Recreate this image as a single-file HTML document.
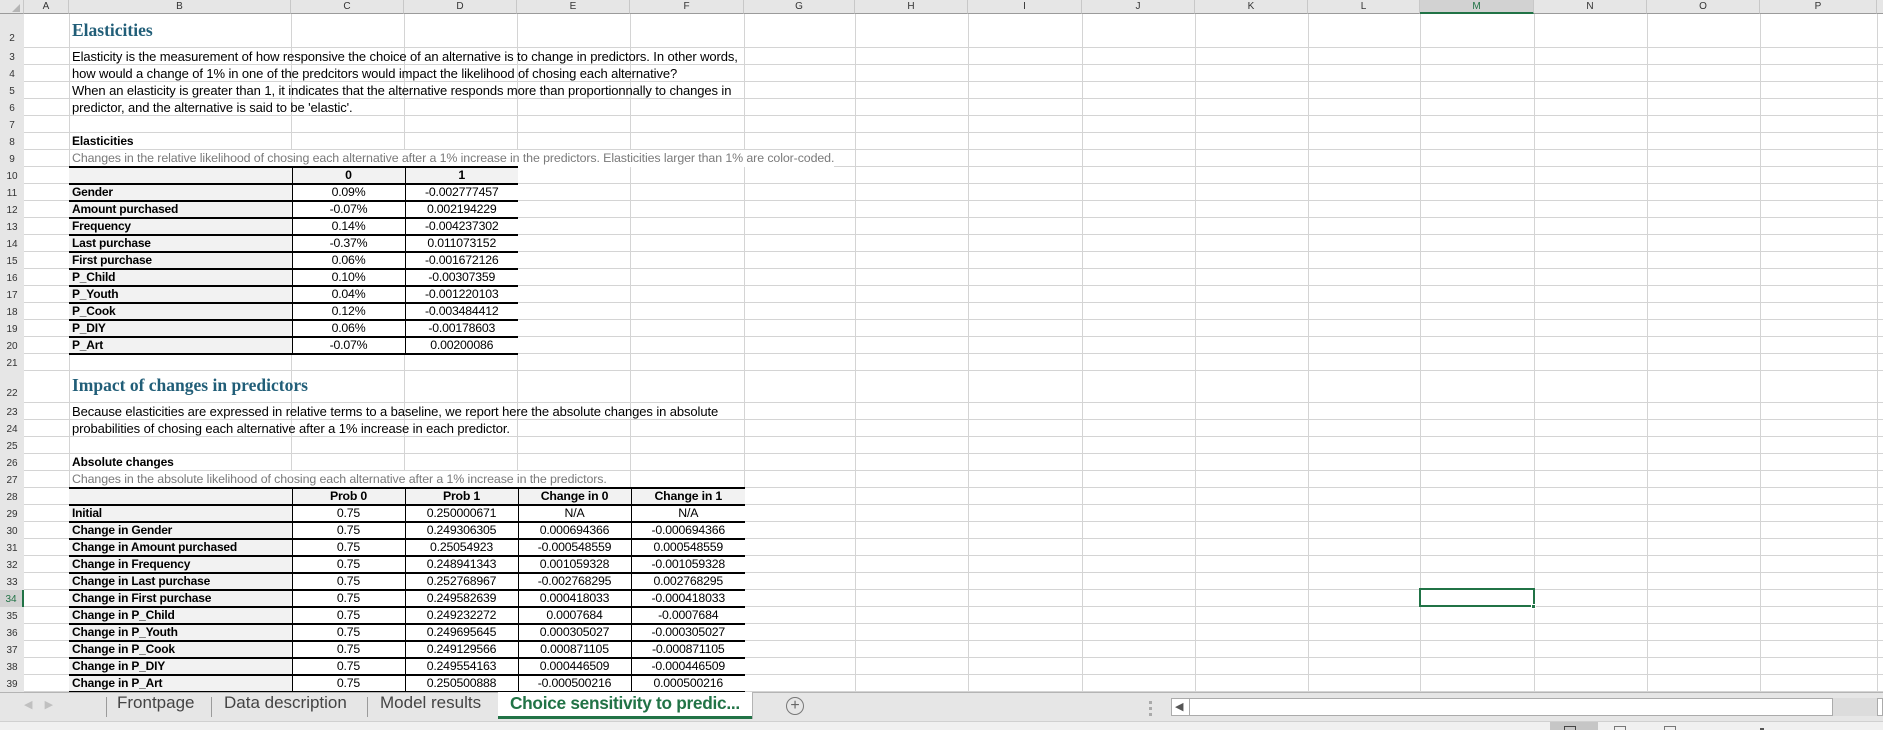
<!DOCTYPE html>
<html><head><meta charset="utf-8">
<style>
*{margin:0;padding:0;box-sizing:border-box}
body{width:1883px;height:730px;overflow:hidden;background:#fff;position:relative;font-family:"Liberation Sans",sans-serif;font-size:11px;color:#000}
.a{position:absolute;white-space:nowrap}
.vl{position:absolute;top:0;width:1px;height:692px;background:#d4d4d4}
.hdr{position:absolute;top:0;height:14px;background:#e6e6e6;border-bottom:1px solid #9b9b9b;text-align:center;font-size:10px;line-height:14px;color:#333;border-right:1px solid #c8c8c8}
.rn{position:absolute;left:0;width:24px;height:17px;font-size:10px;color:#333;text-align:center;line-height:19px;background:#e6e6e6}
.t{position:absolute;left:72px;font-size:13px;line-height:17px;letter-spacing:-0.1px;color:#000}
.g{color:#7a7a7a;font-size:12.4px}
.title{position:absolute;left:72px;font-family:"Liberation Serif",serif;font-weight:bold;color:#215e78;font-size:17.5px}
table{position:absolute;border-collapse:collapse;font-size:12.3px;letter-spacing:-0.2px;table-layout:fixed}
td{height:17px;border-bottom:2px solid #000;padding:0 3px;text-align:center;line-height:15px;background:#fff;border-left:1px solid #000;overflow:hidden;white-space:nowrap}
td.l{text-align:left;font-weight:bold;background:#f2f2f2;border-left:none;font-size:12px}
tr.h td{background:#f2f2f2;font-weight:bold}
</style></head><body>
<div class="a" style="left:0;top:0;width:1883px;height:692px;background:
repeating-linear-gradient(to bottom,transparent 0,transparent 16px,#d4d4d4 16px,#d4d4d4 17px) 0 48px/1883px 323px no-repeat,
repeating-linear-gradient(to bottom,transparent 0,transparent 16px,#d4d4d4 16px,#d4d4d4 17px) 0 403px/1883px 289px no-repeat;"></div>
<div class="a" style="left:0;top:47px;width:1883px;height:1px;background:#d4d4d4"></div>
<div class="a" style="left:0;top:402px;width:1883px;height:1px;background:#d4d4d4"></div>
<div class="vl" style="left:69px"></div><div class="vl" style="left:291px"></div><div class="vl" style="left:404px"></div><div class="vl" style="left:517px"></div><div class="vl" style="left:630px"></div><div class="vl" style="left:744px"></div><div class="vl" style="left:855px"></div><div class="vl" style="left:968px"></div><div class="vl" style="left:1082px"></div><div class="vl" style="left:1195px"></div><div class="vl" style="left:1308px"></div><div class="vl" style="left:1420px"></div><div class="vl" style="left:1534px"></div><div class="vl" style="left:1647px"></div><div class="vl" style="left:1760px"></div><div class="vl" style="left:1877px"></div>
<div class="hdr" style="left:0;width:24px"><span style="position:absolute;right:3px;bottom:1px;width:0;height:0;border-left:8px solid transparent;border-bottom:8px solid #b5b5b5"></span></div>
<div class="hdr" style="left:24px;width:45px">A</div>
<div class="hdr" style="left:69px;width:222px">B</div>
<div class="hdr" style="left:291px;width:113px">C</div>
<div class="hdr" style="left:404px;width:113px">D</div>
<div class="hdr" style="left:517px;width:113px">E</div>
<div class="hdr" style="left:630px;width:114px">F</div>
<div class="hdr" style="left:744px;width:111px">G</div>
<div class="hdr" style="left:855px;width:113px">H</div>
<div class="hdr" style="left:968px;width:114px">I</div>
<div class="hdr" style="left:1082px;width:113px">J</div>
<div class="hdr" style="left:1195px;width:113px">K</div>
<div class="hdr" style="left:1308px;width:112px">L</div>
<div class="hdr" style="left:1420px;width:114px;background:#d2d2d2;border-bottom:2px solid #217346;color:#217346">M</div>
<div class="hdr" style="left:1534px;width:113px">N</div>
<div class="hdr" style="left:1647px;width:113px">O</div>
<div class="hdr" style="left:1760px;width:117px">P</div>
<div class="hdr" style="left:1877px;width:6px;border-right:none"></div>
<div class="a" style="left:0;top:14px;width:24px;height:678px;background:#e6e6e6;border-right:1px solid #9b9b9b"></div>
<div class="rn" style="top:14px;height:34px;line-height:50px">2</div>
<div class="rn" style="top:48px">3</div><div class="rn" style="top:65px">4</div><div class="rn" style="top:82px">5</div><div class="rn" style="top:99px">6</div><div class="rn" style="top:116px">7</div><div class="rn" style="top:133px">8</div><div class="rn" style="top:150px">9</div><div class="rn" style="top:167px">10</div><div class="rn" style="top:184px">11</div><div class="rn" style="top:201px">12</div><div class="rn" style="top:218px">13</div><div class="rn" style="top:235px">14</div><div class="rn" style="top:252px">15</div><div class="rn" style="top:269px">16</div><div class="rn" style="top:286px">17</div><div class="rn" style="top:303px">18</div><div class="rn" style="top:320px">19</div><div class="rn" style="top:337px">20</div><div class="rn" style="top:354px">21</div>
<div class="rn" style="top:371px;height:32px;line-height:46px">22</div>
<div class="rn" style="top:403px">23</div><div class="rn" style="top:420px">24</div><div class="rn" style="top:437px">25</div><div class="rn" style="top:454px">26</div><div class="rn" style="top:471px">27</div><div class="rn" style="top:488px">28</div><div class="rn" style="top:505px">29</div><div class="rn" style="top:522px">30</div><div class="rn" style="top:539px">31</div><div class="rn" style="top:556px">32</div><div class="rn" style="top:573px">33</div>
<div class="rn" style="top:590px;background:#d2d2d2;color:#217346;border-right:2px solid #217346">34</div>
<div class="rn" style="top:607px">35</div><div class="rn" style="top:624px">36</div><div class="rn" style="top:641px">37</div><div class="rn" style="top:658px">38</div><div class="rn" style="top:675px">39</div>
<div class="title" style="top:20px">Elasticities</div>
<div class="t" style="top:48px">Elasticity is the measurement of how responsive the choice of an alternative is to change in predictors. In other words,</div>
<div class="t" style="top:65px">how would a change of 1% in one of the predcitors would impact the likelihood of chosing each alternative?</div>
<div class="t" style="top:82px">When an elasticity is greater than 1, it indicates that the alternative responds more than proportionnally to changes in</div>
<div class="t" style="top:99px">predictor, and the alternative is said to be 'elastic'.</div>
<div class="t" style="top:133px;font-weight:bold;font-size:12px">Elasticities</div>
<div class="t g" style="top:150px;background:#fff">Changes in the relative likelihood of chosing each alternative after a 1% increase in the predictors. Elasticities larger than 1% are color-coded.</div>
<div class="title" style="top:375px">Impact of changes in predictors</div>
<div class="t" style="top:403px">Because elasticities are expressed in relative terms to a baseline, we report here the absolute changes in absolute</div>
<div class="t" style="top:420px">probabilities of chosing each alternative after a 1% increase in each predictor.</div>
<div class="t" style="top:454px;font-weight:bold;font-size:12px">Absolute changes</div>
<div class="t g" style="top:471px;background:#fff;padding-right:4px">Changes in the absolute likelihood of chosing each alternative after a 1% increase in the predictors.</div>
<table style="left:69px;top:166px;width:449px;border-top:2px solid #000">
<colgroup><col style="width:223px"><col style="width:113px"><col style="width:113px"></colgroup>
<tr class="h"><td class="l"></td><td>0</td><td>1</td></tr>
<tr><td class="l">Gender</td><td>0.09%</td><td>-0.002777457</td></tr>
<tr><td class="l">Amount purchased</td><td>-0.07%</td><td>0.002194229</td></tr>
<tr><td class="l">Frequency</td><td>0.14%</td><td>-0.004237302</td></tr>
<tr><td class="l">Last purchase</td><td>-0.37%</td><td>0.011073152</td></tr>
<tr><td class="l">First purchase</td><td>0.06%</td><td>-0.001672126</td></tr>
<tr><td class="l">P_Child</td><td>0.10%</td><td>-0.00307359</td></tr>
<tr><td class="l">P_Youth</td><td>0.04%</td><td>-0.001220103</td></tr>
<tr><td class="l">P_Cook</td><td>0.12%</td><td>-0.003484412</td></tr>
<tr><td class="l">P_DIY</td><td>0.06%</td><td>-0.00178603</td></tr>
<tr><td class="l">P_Art</td><td>-0.07%</td><td>0.00200086</td></tr>
</table>
<table style="left:69px;top:487px;width:676px;border-top:2px solid #000">
<colgroup><col style="width:223px"><col style="width:113px"><col style="width:113px"><col style="width:113px"><col style="width:114px"></colgroup>
<tr class="h"><td class="l"></td><td>Prob 0</td><td>Prob 1</td><td>Change in 0</td><td>Change in 1</td></tr>
<tr><td class="l">Initial</td><td>0.75</td><td>0.250000671</td><td>N/A</td><td>N/A</td></tr>
<tr><td class="l">Change in Gender</td><td>0.75</td><td>0.249306305</td><td>0.000694366</td><td>-0.000694366</td></tr>
<tr><td class="l">Change in Amount purchased</td><td>0.75</td><td>0.25054923</td><td>-0.000548559</td><td>0.000548559</td></tr>
<tr><td class="l">Change in Frequency</td><td>0.75</td><td>0.248941343</td><td>0.001059328</td><td>-0.001059328</td></tr>
<tr><td class="l">Change in Last purchase</td><td>0.75</td><td>0.252768967</td><td>-0.002768295</td><td>0.002768295</td></tr>
<tr><td class="l">Change in First purchase</td><td>0.75</td><td>0.249582639</td><td>0.000418033</td><td>-0.000418033</td></tr>
<tr><td class="l">Change in P_Child</td><td>0.75</td><td>0.249232272</td><td>0.0007684</td><td>-0.0007684</td></tr>
<tr><td class="l">Change in P_Youth</td><td>0.75</td><td>0.249695645</td><td>0.000305027</td><td>-0.000305027</td></tr>
<tr><td class="l">Change in P_Cook</td><td>0.75</td><td>0.249129566</td><td>0.000871105</td><td>-0.000871105</td></tr>
<tr><td class="l">Change in P_DIY</td><td>0.75</td><td>0.249554163</td><td>0.000446509</td><td>-0.000446509</td></tr>
<tr><td class="l">Change in P_Art</td><td>0.75</td><td>0.250500888</td><td>-0.000500216</td><td>0.000500216</td></tr>
</table>
<div class="a" style="left:1419px;top:588px;width:116px;height:19px;border:2px solid #217346"></div>
<div class="a" style="left:1531px;top:604px;width:5px;height:5px;background:#217346;border:1px solid #fff"></div>
<div class="a" style="left:0;top:692px;width:1883px;height:29px;background:#e6e6e6;border-top:1px solid #b4b4b4"></div>
<div class="a" style="left:24px;top:698px;color:#c0c0c0;font-size:11px">&#9664;&nbsp;&nbsp;&nbsp;&nbsp;&#9654;</div>
<div class="a" style="left:106px;top:697px;width:1px;height:20px;background:#9b9b9b"></div>
<div class="a" style="left:117px;top:693px;font-size:17px;color:#444">Frontpage</div>
<div class="a" style="left:211px;top:697px;width:1px;height:20px;background:#9b9b9b"></div>
<div class="a" style="left:224px;top:693px;font-size:17px;color:#444">Data description</div>
<div class="a" style="left:367px;top:697px;width:1px;height:20px;background:#9b9b9b"></div>
<div class="a" style="left:380px;top:693px;font-size:17px;color:#444">Model results</div>
<div class="a" style="left:498px;top:692px;width:254px;height:27px;background:#fff;border-bottom:3px solid #217346;box-shadow:1px 0 0 #b4b4b4"></div>
<div class="a" style="left:510px;top:693px;font-size:17.3px;color:#217346;font-weight:bold;letter-spacing:-0.3px">Choice sensitivity to predic...</div>
<div class="a" style="left:786px;top:697px;width:18px;height:18px;border:1px solid #777;border-radius:50%;text-align:center;line-height:15px;font-size:16px;color:#666">+</div>
<div class="a" style="left:1149px;top:701px;width:3px;height:3px;background:#aaa;box-shadow:0 6px 0 #aaa,0 12px 0 #aaa"></div>
<div class="a" style="left:1171px;top:698px;width:662px;height:18px;background:#fff;border:1px solid #ababab"></div>
<div class="a" style="left:1189px;top:698px;width:1px;height:18px;background:#ababab"></div>
<div class="a" style="left:1175px;top:700px;font-size:11px;color:#555">&#9664;</div>
<div class="a" style="left:1833px;top:698px;width:44px;height:18px;background:#dcdcdc"></div>
<div class="a" style="left:1877px;top:698px;width:6px;height:18px;background:#fff;border:1px solid #ababab"></div>
<div class="a" style="left:0;top:721px;width:1883px;height:9px;background:#f0f0f0;border-top:1px solid #d0d0d0"></div>
<div class="a" style="left:1550px;top:722px;width:48px;height:8px;background:#c6c6c6"></div>
<div class="a" style="left:1564px;top:726px;width:12px;height:4px;border:1px solid #444;border-bottom:none"></div>
<div class="a" style="left:1614px;top:726px;width:12px;height:4px;border:1px solid #777;border-bottom:none"></div>
<div class="a" style="left:1664px;top:726px;width:12px;height:4px;border:1px solid #777;border-bottom:none"></div>
<div class="a" style="left:1760px;top:728px;width:4px;height:2px;background:#555"></div>
</body></html>
